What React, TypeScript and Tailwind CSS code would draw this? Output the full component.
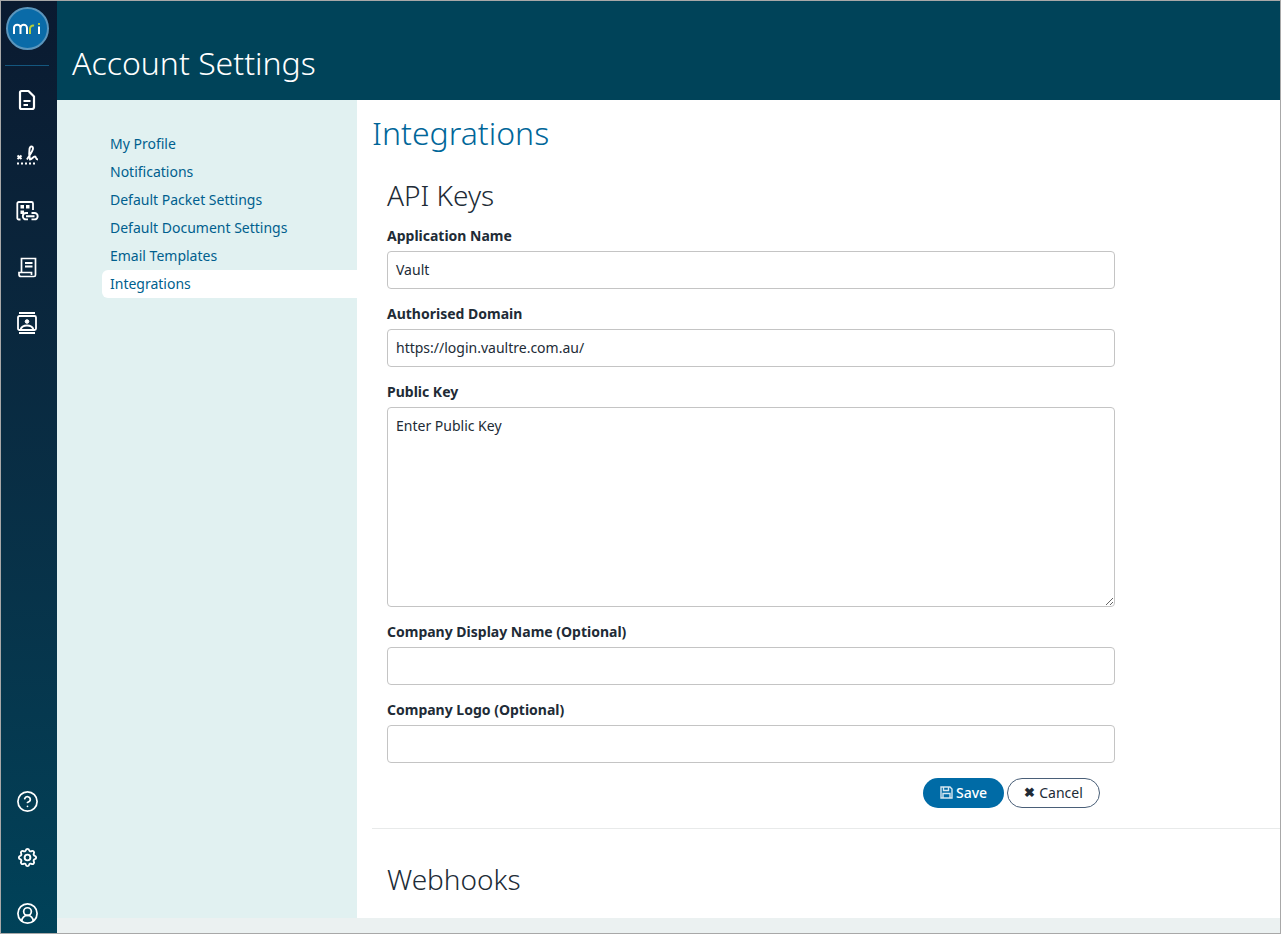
import { CircleHelp, CircleUserRound } from "lucide-react"
import { TbSettings } from "react-icons/tb"

const navItems = ["My Profile", "Notifications", "Default Packet Settings", "Default Document Settings", "Email Templates", "Integrations"]

function DocIcon() {
  return (
    <svg width="18" height="22" viewBox="0 0 18 22" fill="none" stroke="white" strokeWidth="2.200" strokeLinejoin="round">
      <path d="M3.500 2h7l5.500 5.500V18a2 2 0 0 1-2 2H3.500a1.500 1.500 0 0 1-1.500-1.500v-15A1.500 1.500 0 0 1 3.500 2z" />
      <path d="M5.500 12h7M5.500 16h4.500" strokeWidth="2" />
    </svg>
  )
}

function SignIcon() {
  return (
    <svg width="22" height="20" viewBox="0 0 22 20" fill="none" stroke="white">
      <path d="M1.500 10.500l4 3.500M5.500 10.500l-4 3.500" strokeWidth="2" />
      <path d="M11 14.500C13 11 17 6 17 3.500 17 .8 14 .8 13.500 4 13 7 13 11 14 14.500c2 0 3-3 5-3 1.500 0 0 3 3 3" strokeWidth="1.900" />
      <path d="M1 18.500h20" strokeWidth="2" strokeDasharray="2 2" />
    </svg>
  )
}

function LinkDocIcon() {
  return (
    <svg width="24" height="20" viewBox="0 0 24 20" fill="none" stroke="white">
      <path d="M5.500 18.500H3.800a1.500 1.500 0 0 1-1.500-1.500V2.500A1.500 1.500 0 0 1 3.800 1h12.700A1.500 1.500 0 0 1 18 2.500V9" strokeWidth="1.800" />
      <rect x="5.500" y="4" width="3.500" height="3.500" fill="white" stroke="none" />
      <rect x="11" y="4" width="3.500" height="3.500" fill="white" stroke="none" />
      <rect x="5.500" y="9.500" width="3.500" height="3.500" fill="white" stroke="none" />
      <path d="M13 12h-2a3.200 3.200 0 0 0 0 6.400h2M16.500 12h3a3.200 3.200 0 0 1 0 6.400h-3M11 15.200h8.500" strokeWidth="1.900" />
    </svg>
  )
}

function ScrollIcon() {
  return (
    <svg width="19" height="21" viewBox="0 0 19 21" fill="none" stroke="white" strokeWidth="1.700">
      <path d="M3.500 15V1.500h14V18a1.500 1.500 0 0 1-1.500 1.500H3A2 2 0 0 1 1 17.500V15.500h12.500V18" />
      <path d="M7 6h7.500M7 9.500h7.500" strokeWidth="2" />
    </svg>
  )
}

function ContactIcon() {
  return (
    <svg width="20" height="22" viewBox="0 0 20 22" fill="none" stroke="white">
      <path d="M2 1h16M2 21h16" strokeWidth="1.800" />
      <rect x="1" y="4" width="18" height="14" rx="1.500" strokeWidth="1.800" />
      <circle cx="10" cy="9.500" r="1.800" fill="white" strokeWidth="1" />
      <path d="M3.500 17.500c1-3 3.500-4 6.500-4s5.500 1 6.500 4" strokeWidth="1.800" />
    </svg>
  )
}

function MriLogo() {
  return (
    <div className="flex h-[43px] w-[43px] items-center justify-center rounded-full border-2 border-[#5b96bd] bg-[#0a6ba8]">
      <svg width="29" height="11" viewBox="0 0 29 11" fill="none" strokeWidth="2">
        <path d="M1 11V5a2.800 2.800 0 0 1 6.500-.2V11M7.500 5a2.800 2.800 0 0 1 6.500 0V11" stroke="white" />
        <path d="M17 11V5.500a3 3 0 0 1 4-2.800" stroke="#b5cf3a" />
        <path d="M26 11V3.500" stroke="white" />
        <path d="M26 0v2" stroke="#b5cf3a" />
      </svg>
    </div>
  )
}

function Field({ label, value }: { label: string; value?: string }) {
  return (
    <div className="mb-[14px]">
      <label className="mb-[5px] block text-[14px] leading-[21px] font-bold text-[#212b36]">{label}</label>
      <div className="flex h-[38px] items-center rounded-[4px] border border-[#c4c4c4] bg-white px-2 pb-[2px] text-[14px] text-[#212b36]">{value}</div>
    </div>
  )
}

export default function App() {
  return (
    <div className="flex h-[934px] w-[1281px] overflow-hidden border border-[#a8a8a8] bg-white font-['Noto_Sans',sans-serif]">
      <aside className="flex w-[56px] shrink-0 flex-col items-center bg-gradient-to-b from-[#0a1a30] to-[#004259] pr-[4px]">
        <div className="mt-[6px] mb-[15px]"><MriLogo /></div>
        <div className="h-px w-[44px] bg-[#14577f]" />
        <div className="mt-[24px] flex flex-col items-center">
          <div className="flex h-[20px] items-center"><DocIcon /></div>
          <div className="mt-[35px] flex h-[20px] items-center"><SignIcon /></div>
          <div className="mt-[36px] flex h-[20px] items-center"><LinkDocIcon /></div>
          <div className="mt-[36px] flex h-[20px] items-center"><ScrollIcon /></div>
          <div className="mt-[36px] flex h-[20px] items-center"><ContactIcon /></div>
        </div>
        <div className="mt-auto mb-[8px] flex flex-col items-center gap-[33px]">
          <CircleHelp size={23} color="white" strokeWidth={1.800} />
          <TbSettings size={23} color="white" />
          <CircleUserRound size={23} color="white" strokeWidth={1.800} />
        </div>
      </aside>

      <div className="flex min-w-0 flex-1 flex-col bg-[#ebf1f1]">
        <header className="flex h-[99px] shrink-0 items-end bg-[#004359] pb-[15px] pl-[15px] text-[32px] leading-[44px] font-light text-white">
          Account Settings
        </header>
        <div className="flex h-[818px] shrink-0">
          <nav className="w-[300px] shrink-0 bg-[#e1f1f1] pt-[30px] pl-[45px]">
            {navItems.map((item) => (
              <div
                key={item}
                className={`flex h-[28px] items-center rounded-l-[6px] pl-2 pb-[2px] text-[14px] text-[#005f8e] ${item === "Integrations" ? "bg-white" : ""}`}
              >
                {item}
              </div>
            ))}
          </nav>
          <main className="min-w-0 flex-1 bg-white">
            <h1 className="mt-[11px] ml-[15px] text-[32px] leading-[44px] font-light text-[#006699]">Integrations</h1>
            <div className="mt-[21px] ml-[30px] w-[728px]">
              <h2 className="mb-[11px] text-[28px] leading-[38px] font-light text-[#212b36]">API Keys</h2>
              <Field label="Application Name" value="Vault" />
              <Field label="Authorised Domain" value="https://login.vaultre.com.au/" />
              <div className="mb-[14px]">
                <label className="mb-[5px] block text-[14px] leading-[21px] font-bold text-[#212b36]">Public Key</label>
                <textarea
                  readOnly
                  defaultValue="Enter Public Key"
                  className="block h-[200px] w-full rounded-[4px] border border-[#c4c4c4] bg-white px-2 py-[7px] text-[14px] text-[#212b36] outline-none"
                />
              </div>
              <Field label="Company Display Name (Optional)" />
              <Field label="Company Logo (Optional)" />
              <div className="mt-[15px] flex justify-end gap-[3px] pr-[15px]">
                <button className="flex h-[30px] w-[81px] items-center justify-center gap-[3px] rounded-full bg-[#006ba6] pb-[1px] text-[14px] font-medium text-white">
                  <svg width="13" height="13" viewBox="0 0 13 13" fill="none" stroke="#d6e7f1" strokeWidth="1.400">
                    <path d="M1 1h9l2 2v9H1z" />
                    <path d="M3.500 1v3.500h5V1M3 12V7.500h7V12" />
                  </svg>
                  Save
                </button>
                <button className="flex h-[30px] w-[93px] items-center justify-center gap-[4px] rounded-full border border-[#4a5f78] bg-white pb-[1px] text-[14px] text-[#212b36]">
                  <span className="text-[13px] leading-none font-bold">✖</span>
                  Cancel
                </button>
              </div>
            </div>
            <div className="mt-[20px] ml-[15px] border-t border-[#e8eaea]" />
            <h2 className="mt-[31px] ml-[30px] text-[28px] leading-[38px] font-light text-[#212b36]">Webhooks</h2>
          </main>
        </div>
      </div>
    </div>
  )
}
